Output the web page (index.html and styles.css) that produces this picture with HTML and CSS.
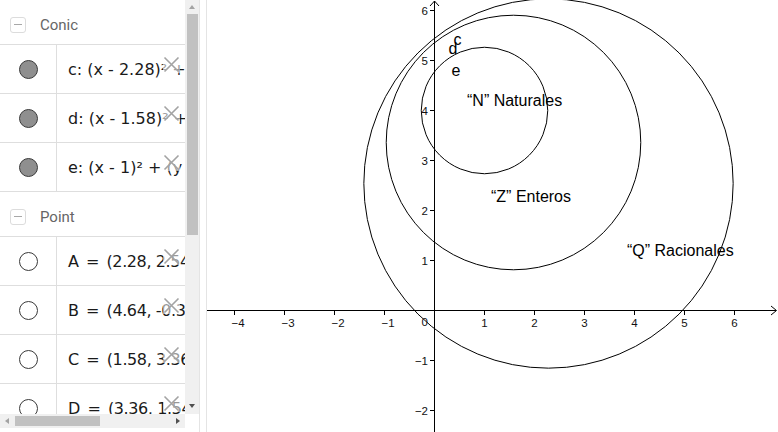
FILE: index.html
```html
<!DOCTYPE html>
<html>
<head>
<meta charset="utf-8">
<link rel="stylesheet" href="styles.css">
</head>
<body>
<div class="app">
  <aside class="algebra">
    <div class="algebra-main">
      <div class="list">
        <div class="group-header"><span class="toggle"></span><span class="group-title">Conic</span></div>
        <div class="item"><div class="marker"><span class="dot filled"></span></div><div class="formula"><span class="text">c: (x - 2.28)² + (y - 2.54)² = 13.64</span><span class="delete"><svg width="17" height="17" viewBox="0 0 17 17"><path d="M1.5 1.5 L15.5 15.5 M15.5 1.5 L1.5 15.5"/></svg></span></div></div>
        <div class="item"><div class="marker"><span class="dot filled"></span></div><div class="formula"><span class="text">d: (x - 1.58)² + (y - 3.36)² = 6.48</span><span class="delete"><svg width="17" height="17" viewBox="0 0 17 17"><path d="M1.5 1.5 L15.5 15.5 M15.5 1.5 L1.5 15.5"/></svg></span></div></div>
        <div class="item"><div class="marker"><span class="dot filled"></span></div><div class="formula"><span class="text">e: (x - 1)² + (y - 4)² = 1.6</span><span class="delete"><svg width="17" height="17" viewBox="0 0 17 17"><path d="M1.5 1.5 L15.5 15.5 M15.5 1.5 L1.5 15.5"/></svg></span></div></div>
        <div class="group-header"><span class="toggle"></span><span class="group-title">Point</span></div>
        <div class="item"><div class="marker"><span class="dot"></span></div><div class="formula"><span class="text">A <span class="eq">=</span> <span class="coords">(2.28, 2.54)</span></span><span class="delete"><svg width="17" height="17" viewBox="0 0 17 17"><path d="M1.5 1.5 L15.5 15.5 M15.5 1.5 L1.5 15.5"/></svg></span></div></div>
        <div class="item"><div class="marker"><span class="dot"></span></div><div class="formula"><span class="text">B <span class="eq">=</span> <span class="coords">(4.64, -0.3)</span></span><span class="delete"><svg width="17" height="17" viewBox="0 0 17 17"><path d="M1.5 1.5 L15.5 15.5 M15.5 1.5 L1.5 15.5"/></svg></span></div></div>
        <div class="item"><div class="marker"><span class="dot"></span></div><div class="formula"><span class="text">C <span class="eq">=</span> <span class="coords">(1.58, 3.36)</span></span><span class="delete"><svg width="17" height="17" viewBox="0 0 17 17"><path d="M1.5 1.5 L15.5 15.5 M15.5 1.5 L1.5 15.5"/></svg></span></div></div>
        <div class="item"><div class="marker"><span class="dot"></span></div><div class="formula"><span class="text">D <span class="eq">=</span> <span class="coords">(3.36, 1.54)</span></span><span class="delete"><svg width="17" height="17" viewBox="0 0 17 17"><path d="M1.5 1.5 L15.5 15.5 M15.5 1.5 L1.5 15.5"/></svg></span></div></div>
      </div>
      <div class="vscroll">
        <span class="arrow up"></span>
        <div class="vthumb"></div>
        <div class="spacer"></div>
        <span class="arrow down"></span>
      </div>
    </div>
    <div class="hscroll-row">
      <div class="hscroll">
        <span class="arrow left"></span>
        <div class="hthumb"></div>
        <div class="spacer"></div>
        <span class="arrow right"></span>
      </div>
      <div class="corner"></div>
    </div>
  </aside>
  <div class="splitter"></div>
  <main class="graphics">
    <svg class="plot" width="571" height="432" viewBox="207 0 571 432">
      <g class="curves">
        <circle cx="548.5" cy="183.5" r="184.66"/>
        <circle cx="513.5" cy="142.5" r="127.28"/>
        <circle cx="484.5" cy="110.5" r="63.25"/>
      </g>
      <g class="axes">
        <line x1="207" y1="310.5" x2="776" y2="310.5"/>
        <polyline points="771,306 776.5,310.5 771,315"/>
        <line x1="434.5" y1="432" x2="434.5" y2="1"/>
        <polyline points="430,6 434.5,1 439,6"/>
        <path d="M234.5 311 V315 M284.5 311 V315 M334.5 311 V315 M384.5 311 V315 M484.5 311 V315 M534.5 311 V315 M584.5 311 V315 M634.5 311 V315 M684.5 311 V315 M734.5 311 V315"/>
        <path d="M430 10.5 H434 M430 60.5 H434 M430 110.5 H434 M430 160.5 H434 M430 210.5 H434 M430 260.5 H434 M430 360.5 H434 M430 410.5 H434"/>
      </g>
      <g class="tick-labels">
        <text x="231.5" y="327">−4</text>
        <text x="281.5" y="327">−3</text>
        <text x="331.5" y="327">−2</text>
        <text x="381.5" y="327">−1</text>
        <text x="428" y="326" class="end">0</text>
        <text x="484.5" y="327" class="mid">1</text>
        <text x="534.5" y="327" class="mid">2</text>
        <text x="584.5" y="327" class="mid">3</text>
        <text x="634.5" y="327" class="mid">4</text>
        <text x="684.5" y="327" class="mid">5</text>
        <text x="734.5" y="327" class="mid">6</text>
        <text x="428" y="14.5" class="end">6</text>
        <text x="428" y="64.5" class="end">5</text>
        <text x="428" y="114.5" class="end">4</text>
        <text x="428" y="164.5" class="end">3</text>
        <text x="428" y="214.5" class="end">2</text>
        <text x="428" y="264.5" class="end">1</text>
        <text x="428" y="364.5" class="end">−1</text>
        <text x="428" y="414.5" class="end">−2</text>
      </g>
      <g class="curve-labels">
        <text x="453.5" y="45">c</text>
        <text x="448.5" y="53.5">d</text>
        <text x="451.5" y="76">e</text>
        <text x="467" y="106">“N” Naturales</text>
        <text x="491" y="201.5">“Z” Enteros</text>
        <text x="627" y="255.5">“Q” Racionales</text>
      </g>
    </svg>
  </main>
</div>
</body>
</html>
```

FILE: styles.css
```css
* {
  box-sizing: border-box;
}

html, body {
  margin: 0;
  padding: 0;
  background: #ffffff;
  overflow: hidden;
}

.app {
  display: flex;
  width: 778px;
  height: 432px;
  background: #ffffff;
}

.algebra {
  width: 200px;
  flex: none;
  display: flex;
  flex-direction: column;
  border-right: 1px solid #e4e4e4;
}

.algebra-main {
  display: flex;
  height: 414px;
}

.list {
  width: 185px;
  flex: none;
  overflow: hidden;
}

.group-header {
  height: 45px;
  display: flex;
  align-items: center;
  padding-top: 5px;
  border-bottom: 1px solid #dedede;
}

.toggle {
  position: relative;
  width: 16px;
  height: 16px;
  margin-left: 10px;
  border: 1px solid #dcdcdc;
  border-radius: 3px;
}

.toggle::after {
  content: "";
  position: absolute;
  left: 3px;
  top: 6px;
  width: 8px;
  height: 1px;
  background: #a8a8a8;
}

.group-title {
  margin-left: 14px;
  font-family: Roboto, "Noto Sans", sans-serif;
  font-size: 15px;
  color: #666666;
}

.item {
  height: 49px;
  display: flex;
  border-bottom: 1px solid #dedede;
}

.marker {
  width: 57px;
  flex: none;
  display: flex;
  align-items: center;
  justify-content: center;
  border-right: 1px solid #dedede;
}

.dot {
  width: 19px;
  height: 19px;
  border-radius: 50%;
  border: 1px solid #3a3a3a;
  background: #ffffff;
}

.dot.filled {
  background: #8f8f8f;
}

.formula {
  position: relative;
  flex: 1;
  min-width: 0;
  display: flex;
  align-items: center;
  padding-left: 11px;
  overflow: hidden;
  white-space: nowrap;
  font-family: "DejaVu Sans", sans-serif;
  font-size: 16px;
  color: #1a1a1a;
}

.eq {
  margin: 0 2px;
}

.coords {
  letter-spacing: -0.4px;
}

.delete {
  position: absolute;
  left: 106px;
  top: 11px;
  width: 17px;
  height: 17px;
  background: rgba(255, 255, 255, 0.55);
}

.delete svg {
  display: block;
}

.delete path {
  stroke: #a3a3a3;
  stroke-width: 1.6;
  fill: none;
}

.vscroll {
  width: 14px;
  flex: none;
  display: flex;
  flex-direction: column;
  align-items: center;
  padding: 5px 0 6px;
  background: #f0f0f0;
}

.vthumb {
  margin-top: 5px;
  width: 11px;
  height: 221px;
  background: #c1c1c1;
}

.spacer {
  flex: 1;
}

.arrow {
  width: 0;
  height: 0;
  display: block;
  flex: none;
}

.arrow.up {
  border-left: 3.5px solid transparent;
  border-right: 3.5px solid transparent;
  border-bottom: 4px solid #a3a3a3;
}

.arrow.down {
  border-left: 3.5px solid transparent;
  border-right: 3.5px solid transparent;
  border-top: 4px solid #505050;
}

.arrow.left {
  border-top: 3.5px solid transparent;
  border-bottom: 3.5px solid transparent;
  border-right: 4px solid #a3a3a3;
}

.arrow.right {
  border-top: 3.5px solid transparent;
  border-bottom: 3.5px solid transparent;
  border-left: 4px solid #505050;
}

.hscroll-row {
  display: flex;
  height: 18px;
}

.hscroll {
  width: 185px;
  height: 14px;
  display: flex;
  align-items: center;
  padding: 0 5px;
  background: #f0f0f0;
}

.hthumb {
  margin-left: 6px;
  width: 85px;
  height: 10px;
  background: #c1c1c1;
}

.corner {
  flex: 1;
  background: #ffffff;
}

.splitter {
  width: 7px;
  flex: none;
  border-right: 1px solid #e4e4e4;
}

.graphics {
  flex: 1;
  overflow: hidden;
}

.plot {
  display: block;
}

.curves circle {
  fill: none;
  stroke: #000000;
  stroke-width: 1;
}

.axes line,
.axes path,
.axes polyline {
  fill: none;
  stroke: #000000;
  stroke-width: 1;
}

.tick-labels text {
  font-family: "Liberation Sans", Arial, sans-serif;
  font-size: 11.5px;
  fill: #111111;
}

.tick-labels text.end {
  text-anchor: end;
}

.tick-labels text.mid {
  text-anchor: middle;
}

.curve-labels text {
  font-family: "Liberation Sans", Arial, sans-serif;
  font-size: 16px;
  fill: #000000;
}
```
